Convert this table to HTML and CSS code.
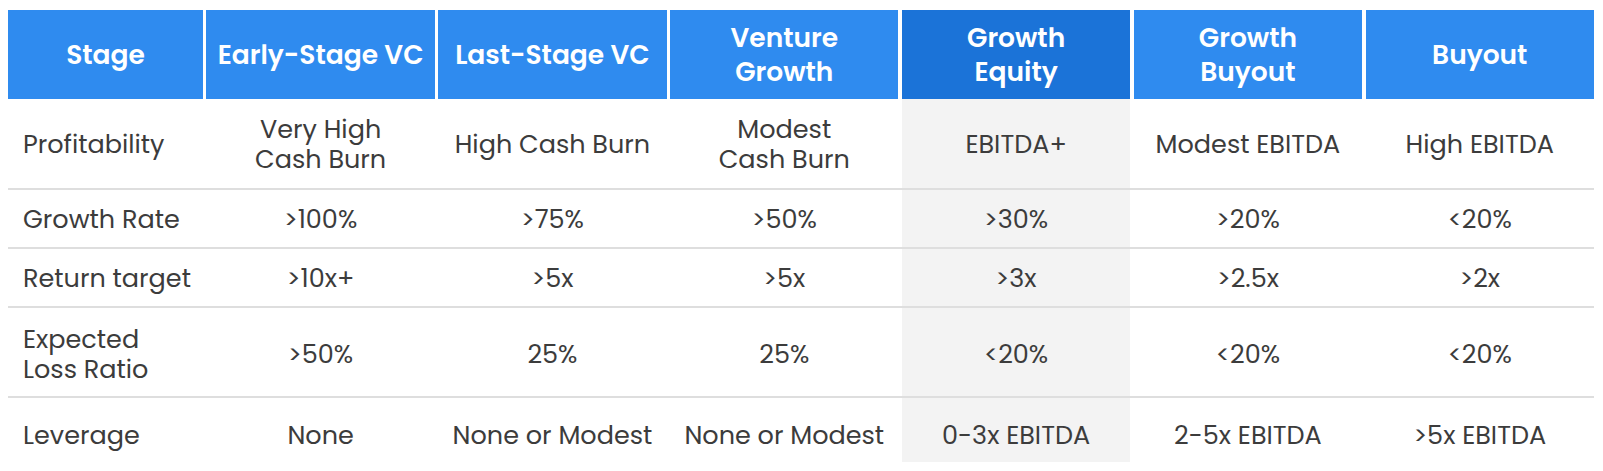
FILE: index.html
```html
<!DOCTYPE html>
<html lang="en">
<head>
<meta charset="utf-8">
<title>Investment stages</title>
<link rel="stylesheet" href="styles.css">
</head>
<body>
<div class="table">
  <div class="row head">
    <div class="cell label">Stage</div>
    <div class="cell">Early-Stage VC</div>
    <div class="cell">Last-Stage VC</div>
    <div class="cell">Venture<br>Growth</div>
    <div class="cell hl">Growth<br>Equity</div>
    <div class="cell">Growth<br>Buyout</div>
    <div class="cell">Buyout</div>
  </div>
  <div class="row r-tall">
    <div class="cell label">Profitability</div>
    <div class="cell">Very High<br>Cash Burn</div>
    <div class="cell">High Cash Burn</div>
    <div class="cell">Modest<br>Cash Burn</div>
    <div class="cell hl">EBITDA+</div>
    <div class="cell">Modest EBITDA</div>
    <div class="cell">High EBITDA</div>
  </div>
  <div class="row r-short">
    <div class="cell label">Growth Rate</div>
    <div class="cell">&gt;100%</div>
    <div class="cell">&gt;75%</div>
    <div class="cell">&gt;50%</div>
    <div class="cell hl">&gt;30%</div>
    <div class="cell">&gt;20%</div>
    <div class="cell">&lt;20%</div>
  </div>
  <div class="row r-short">
    <div class="cell label">Return target</div>
    <div class="cell">&gt;10x+</div>
    <div class="cell">&gt;5x</div>
    <div class="cell">&gt;5x</div>
    <div class="cell hl">&gt;3x</div>
    <div class="cell">&gt;2.5x</div>
    <div class="cell">&gt;2x</div>
  </div>
  <div class="row r-tall2">
    <div class="cell label">Expected<br>Loss Ratio</div>
    <div class="cell">&gt;50%</div>
    <div class="cell">25%</div>
    <div class="cell">25%</div>
    <div class="cell hl">&lt;20%</div>
    <div class="cell">&lt;20%</div>
    <div class="cell">&lt;20%</div>
  </div>
  <div class="row r-last">
    <div class="cell label">Leverage</div>
    <div class="cell">None</div>
    <div class="cell">None or Modest</div>
    <div class="cell">None or Modest</div>
    <div class="cell hl">0-3x EBITDA</div>
    <div class="cell">2-5x EBITDA</div>
    <div class="cell">&gt;5x EBITDA</div>
  </div>
</div>
</body>
</html>
```

FILE: styles.css
```css
html, body {
  margin: 0;
  padding: 0;
  background: #ffffff;
}

body {
  padding: 10px 9px 0 8px;
  font-family: "Poppins", "Inter", "Noto Sans", sans-serif;
  color: #3c3c3c;
}

.table {
  width: 1586px;
  display: flex;
  flex-direction: column;
}

.row {
  display: grid;
  grid-template-columns: 195px repeat(6, 1fr);
  column-gap: 3.4px;
  border-bottom: 2px solid #dedede;
}

.cell {
  display: flex;
  align-items: center;
  justify-content: center;
  text-align: center;
  font-size: 25.5px;
  line-height: 30px;
  font-weight: 400;
}

.row .label {
  justify-content: flex-start;
  text-align: left;
  padding-left: 15px;
}

.head {
  height: 89px;
  border-bottom: none;
}

.head .cell {
  background: #2f8bef;
  color: #ffffff;
  font-weight: 600;
  font-size: 26.5px;
  line-height: 34px;
}

.head .label {
  justify-content: center;
  text-align: center;
  padding-left: 0;
}

.head .cell.hl {
  background: #1b73d8;
}

.cell.hl {
  background: #f3f3f3;
}

.r-tall { height: 89px; }
.r-short { height: 57px; }
.r-tall2 { height: 88px; }
.r-tall2 .cell { padding-top: 3px; }
.r-last { height: 64px; border-bottom: none; }
.r-last .cell { padding-top: 9px; }
```
